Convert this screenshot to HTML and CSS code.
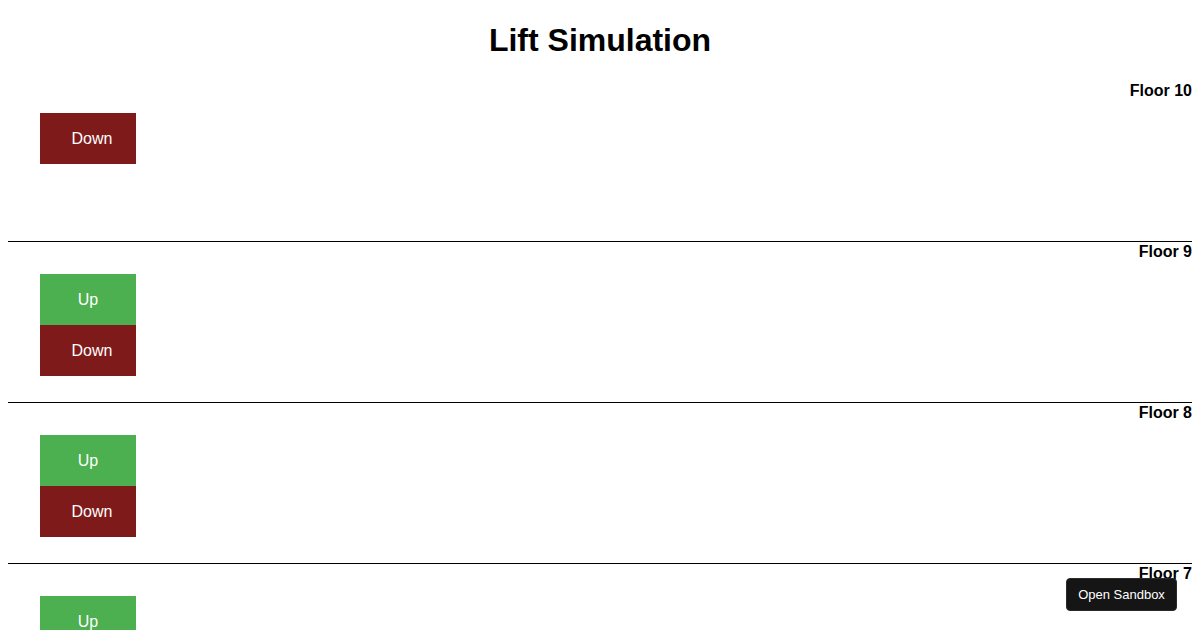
FILE: index.html
```html
<!DOCTYPE html>
<html>
<head>
<meta charset="utf-8">
<title>Lift Simulation</title>
<link rel="stylesheet" href="styles.css">
</head>
<body>
<h1 class="title">Lift Simulation</h1>
<div class="building">
  <div class="floor">
    <div class="floor-label">Floor 10</div>
    <div class="controls">
      <button class="btn btn-down">Down</button>
    </div>
  </div>
  <div class="floor">
    <div class="floor-label">Floor 9</div>
    <div class="controls">
      <button class="btn btn-up">Up</button>
      <button class="btn btn-down">Down</button>
    </div>
  </div>
  <div class="floor">
    <div class="floor-label">Floor 8</div>
    <div class="controls">
      <button class="btn btn-up">Up</button>
      <button class="btn btn-down">Down</button>
    </div>
  </div>
  <div class="floor">
    <div class="floor-label">Floor 7</div>
    <div class="controls">
      <button class="btn btn-up">Up</button>
      <button class="btn btn-down">Down</button>
    </div>
  </div>
</div>
<button class="sandbox">Open Sandbox</button>
</body>
</html>
```

FILE: styles.css
```css
html, body {
  background: #ffffff;
}
body {
  margin: 0 8px;
  font-family: "Liberation Sans", Arial, sans-serif;
  color: #000;
  overflow: hidden;
  height: 630px;
}
.title {
  font-size: 32px;
  font-weight: bold;
  text-align: center;
  margin: 0;
  padding: 22px 0 22px;
  line-height: 37px;
}
.floor {
  height: 160px;
  border-bottom: 1px solid #000;
  display: flex;
  flex-direction: column;
}
.floor-label {
  text-align: right;
  font-weight: bold;
  font-size: 16px;
  line-height: 18px;
  padding-top: 1px;
}
.controls {
  display: flex;
  flex-direction: column;
  margin: 13px 0 0 32px;
}
.btn {
  width: 96px;
  height: 51px;
  border: none;
  margin: 0;
  padding: 0;
  color: #fff;
  font-family: "Liberation Sans", Arial, sans-serif;
  font-size: 16px;
  cursor: pointer;
}
.btn-up {
  background: #4caf50;
}
.btn-down {
  background: #7f1a1a;
  padding-left: 8px;
}
.sandbox {
  position: fixed;
  right: 23px;
  bottom: 19px;
  width: 111px;
  height: 33px;
  background: #151515;
  color: #fff;
  border: 1px solid #2a2a2a;
  border-radius: 4px;
  font-family: "Liberation Sans", Arial, sans-serif;
  font-size: 13px;
  padding: 0;
}
```
